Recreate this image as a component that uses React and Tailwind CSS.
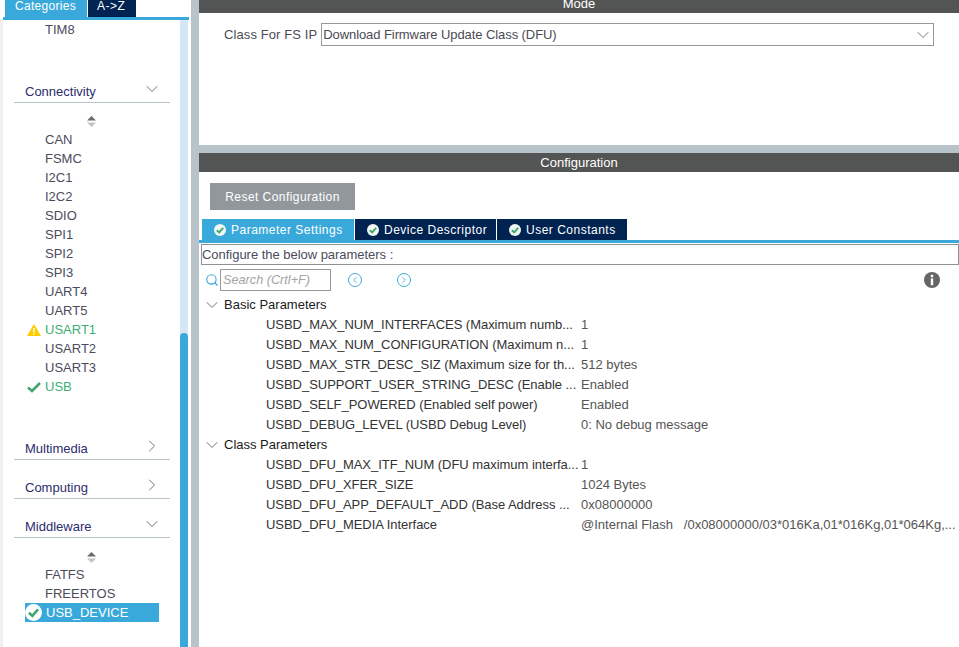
import { ChevronDown, ChevronRight, Search, ChevronLeft } from 'lucide-react';

const CONNECTIVITY = [
  { label: 'CAN' }, { label: 'FSMC' }, { label: 'I2C1' }, { label: 'I2C2' }, { label: 'SDIO' },
  { label: 'SPI1' }, { label: 'SPI2' }, { label: 'SPI3' }, { label: 'UART4' }, { label: 'UART5' },
  { label: 'USART1', status: 'warn' }, { label: 'USART2' }, { label: 'USART3' }, { label: 'USB', status: 'ok' },
];

const BASIC_PARAMS = [
  ['USBD_MAX_NUM_INTERFACES (Maximum numb...', '1'],
  ['USBD_MAX_NUM_CONFIGURATION (Maximum n...', '1'],
  ['USBD_MAX_STR_DESC_SIZ (Maximum size for th...', '512 bytes'],
  ['USBD_SUPPORT_USER_STRING_DESC (Enable ...', 'Enabled'],
  ['USBD_SELF_POWERED (Enabled self power)', 'Enabled'],
  ['USBD_DEBUG_LEVEL (USBD Debug Level)', '0: No debug message'],
];

const CLASS_PARAMS = [
  ['USBD_DFU_MAX_ITF_NUM (DFU maximum interfa...', '1'],
  ['USBD_DFU_XFER_SIZE', '1024 Bytes'],
  ['USBD_DFU_APP_DEFAULT_ADD (Base Address ...', '0x08000000'],
  ['USBD_DFU_MEDIA Interface', '@Internal Flash   /0x08000000/03*016Ka,01*016Kg,01*064Kg,...'],
];

function SortArrows() {
  return (
    <svg width="9" height="11" viewBox="0 0 9 11" className="block">
      <path d="M4.5 0 L9 4.5 H0 Z" fill="#6b6b6b" />
      <path d="M4.5 11 L9 6.5 H0 Z" fill="#c4c4c4" />
    </svg>
  );
}

function SectionHead({ label, open, mt }) {
  const Icon = open ? ChevronDown : ChevronRight;
  return (
    <div className={`ml-[14px] w-[156px] h-[20px] flex items-center justify-between border-b border-[#b9c4ca] pl-[11px] pr-[8px] text-[13px] text-[#2c2c6e] ${mt}`}>
      <span className="-mt-[2px]">{label}</span>
      <Icon size={20} strokeWidth={1.1} color="#666" className="-mt-[7px]" />
    </div>
  );
}

function SideItem({ label, status }) {
  const color = status ? 'text-[#3fae74]' : 'text-[#4b4b5c]';
  return (
    <div className={`h-[19px] flex items-center text-[13px] ${color}`}>
      <span className="w-[45px] flex justify-end pr-[4px]">
        {status === 'warn' && (
          <svg width="14" height="12" viewBox="0 0 14 12">
            <path d="M7 0 L14 12 H0 Z" fill="#ffcc00" />
            <rect x="6.3" y="4" width="1.4" height="4.5" fill="#fff" />
            <rect x="6.3" y="9.3" width="1.4" height="1.4" fill="#fff" />
          </svg>
        )}
        {status === 'ok' && (
          <svg width="14" height="12" viewBox="0 0 14 12">
            <path d="M1 6.5 L5 10 L13 2" fill="none" stroke="#3fa76f" strokeWidth="2.6" />
          </svg>
        )}
      </span>
      <span>{label}</span>
    </div>
  );
}

function OkBadge({ size = 12, fill = '#f0f7f3' }) {
  return (
    <svg width={size} height={size} viewBox="0 0 12 12" className="shrink-0">
      <circle cx="6" cy="6" r="6" fill={fill} />
      <path d="M2.8 6.2 L5.2 8.4 L9.2 3.8" fill="none" stroke="#3fa76f" strokeWidth="1.9" />
    </svg>
  );
}

function Tab({ label, active, width }) {
  return (
    <div className={`${width} h-[21px] mr-[1px] flex items-center pl-[12px] gap-[5px] text-white text-[12px] tracking-[0.5px] whitespace-nowrap ${active ? 'bg-[#39a9dc]' : 'bg-[#002352]'}`}>
      <OkBadge />
      <span>{label}</span>
    </div>
  );
}

function CircleNav({ Icon }) {
  return (
    <span className="w-[14px] h-[14px] rounded-full border border-[#39a9dc] flex items-center justify-center">
      <Icon size={10} strokeWidth={2} color="#39a9dc" />
    </span>
  );
}

function ParamGroup({ title, rows }) {
  return (
    <div>
      <div className="h-[20px] flex items-center text-[13px] text-[#1a1a1a]">
        <ChevronDown size={20} strokeWidth={1.1} color="#666" className="ml-[3px] mr-[2px]" />
        <span>{title}</span>
      </div>
      {rows.map(([name, value]) => (
        <div key={name} className="h-[20px] flex items-center text-[13px] whitespace-nowrap">
          <span className="ml-[67px] w-[315px] shrink-0 text-[#333] tracking-[-0.04px]">{name}</span>
          <span className="text-[#555] whitespace-pre">{value}</span>
        </div>
      ))}
    </div>
  );
}

export default function App() {
  return (
    <div className="w-[959px] h-[647px] overflow-hidden flex bg-white font-['Liberation_Sans',Arial,sans-serif]">
      {/* left tree */}
      <aside className="w-[191px] shrink-0 h-full flex flex-col">
        <div className="h-[17px] flex pl-[5px] shrink-0">
          <div className="w-[82px] bg-[#39a9dc] text-white text-[12px] tracking-[0.3px] pl-[10px] leading-[13px]">Categories</div>
          <div className="w-[48px] ml-[1px] bg-[#002352] text-white text-[12px] tracking-[0.5px] pl-[9px] leading-[13px]">A-&gt;Z</div>
        </div>
        <div className="h-[3px] w-[186px] ml-[3px] bg-[#39a9dc] shrink-0" />
        <div className="flex-1 flex min-h-0 border-l-[3px] border-[#f0f0f0]">
          <div className="w-[180px] -ml-[3px] flex flex-col">
            <div className="h-[19px] flex items-center text-[13px] text-[#4b4b5c] pl-[45px]">TIM8</div>
            <SectionHead label="Connectivity" open mt="mt-[44px]" />
            <div className="flex justify-center pl-[2px] mt-[13px] h-[11px]"><SortArrows /></div>
            <div className="mt-[3px]">
              {CONNECTIVITY.map((it) => <SideItem key={it.label} {...it} />)}
            </div>
            <SectionHead label="Multimedia" mt="mt-[44px]" />
            <SectionHead label="Computing" mt="mt-[19px]" />
            <SectionHead label="Middleware" open mt="mt-[19px]" />
            <div className="flex justify-center pl-[2px] mt-[14px] h-[11px]"><SortArrows /></div>
            <div className="mt-[2px]">
              <SideItem label="FATFS" />
              <SideItem label="FREERTOS" />
            </div>
            <div className="ml-[25px] w-[134px] h-[19px] bg-[#39a9dc] flex items-center text-white text-[13px]">
              <OkBadge size={17} fill="#ffffff" />
              <span className="ml-[4px]">USB_DEVICE</span>
            </div>
          </div>
          <div className="w-[8px] bg-[#d5e6f4] flex flex-col justify-end">
            <div className="h-[314px] bg-[#39a9dc] rounded-t-[4px]" />
          </div>
        </div>
      </aside>

      {/* right side */}
      <main className="flex-1 min-w-0 flex flex-col border-l-[8px] border-[#b9c4ca]">
        <div className="h-[13px] shrink-0 bg-[#535554] text-white text-[13px] text-center leading-[8px] overflow-hidden">Mode</div>
        <div className="h-[132px] shrink-0 pt-[10px] pl-[25px] flex items-start text-[13px] text-[#4b4b55]">
          <span className="h-[23px] flex items-center mr-[4px] tracking-[0.1px]">Class For FS IP</span>
          <div className="w-[613px] h-[23px] border border-[#999] flex items-center justify-between pl-[1px] tracking-[-0.08px]">
            <span>Download Firmware Update Class (DFU)</span>
            <ChevronDown size={20} strokeWidth={1.2} color="#777" />
          </div>
        </div>
        <div className="h-[8px] shrink-0 bg-[#b9c4ca]" />
        <div className="h-[19px] shrink-0 bg-[#535554] text-white text-[13px] flex items-center justify-center">Configuration</div>
        <div className="flex-1 min-h-0">
          <button className="block mt-[11px] ml-[11px] w-[145px] h-[27px] bg-[#92979c] text-white text-[12px] tracking-[0.45px]">Reset Configuration</button>
          <div className="flex mt-[9px] ml-[3px]">
            <Tab label="Parameter Settings" active width="w-[152px]" />
            <Tab label="Device Descriptor" width="w-[141px]" />
            <Tab label="User Constants" width="w-[130px]" />
          </div>
          <div className="h-[3px] bg-[#39a9dc]" />
          <div className="mt-[1px] ml-[2px] h-[21px] border border-[#8b9399] flex items-center text-[13px] text-[#4b4b5c] tracking-[-0.03px]">Configure the below parameters :</div>
          <div className="h-[30px] flex items-center">
            <Search size={14} strokeWidth={2} color="#39a9dc" className="ml-[6px] mr-[1px]" />
            <div className="w-[111px] h-[22px] border border-[#999] pl-[2px] pt-[2px] flex items-center text-[12.7px] italic text-[#a5a5a5]">Search (Crtl+F)</div>
            <span className="ml-[17px]"><CircleNav Icon={ChevronLeft} /></span>
            <span className="ml-[35px]"><CircleNav Icon={ChevronRight} /></span>
            <svg width="16" height="16" viewBox="0 0 16 16" className="ml-[513px]">
              <circle cx="8" cy="8" r="8" fill="#666" />
              <rect x="6.8" y="2.8" width="2.4" height="2.4" fill="#fff" />
              <rect x="6.8" y="6.4" width="2.4" height="6.8" fill="#fff" />
            </svg>
          </div>
          <ParamGroup title="Basic Parameters" rows={BASIC_PARAMS} />
          <ParamGroup title="Class Parameters" rows={CLASS_PARAMS} />
        </div>
      </main>
    </div>
  );
}
